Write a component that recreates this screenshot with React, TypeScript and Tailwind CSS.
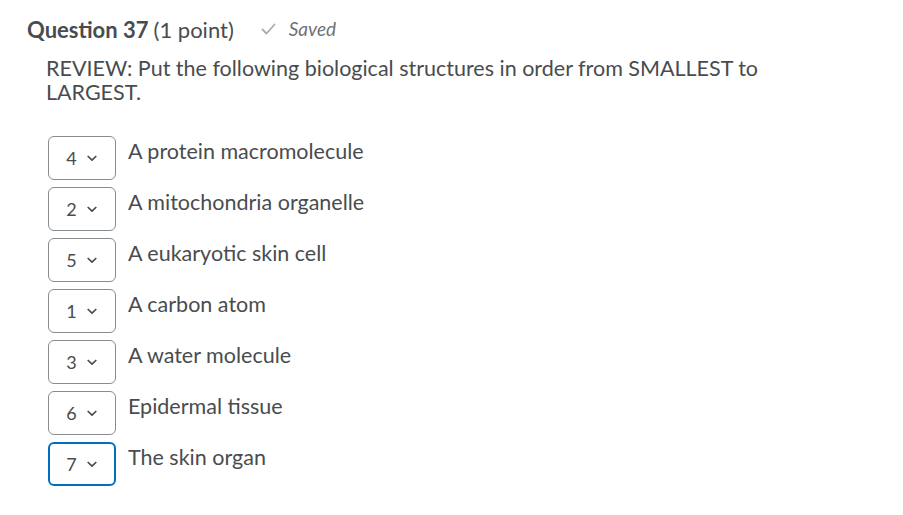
import React from "react";

const items = [
  { value: "4", label: "A protein macromolecule" },
  { value: "2", label: "A mitochondria organelle" },
  { value: "5", label: "A eukaryotic skin cell" },
  { value: "1", label: "A carbon atom" },
  { value: "3", label: "A water molecule" },
  { value: "6", label: "Epidermal tissue" },
  { value: "7", label: "The skin organ", focused: true },
];

const Chevron = () => (
  <svg width="10" height="7" viewBox="0 0 10 7" fill="none">
    <path d="M1.2 1.5L5 5.2l3.8-3.7" stroke="#494c4e" strokeWidth="1.7" strokeLinecap="round" strokeLinejoin="round" />
  </svg>
);

const Check = () => (
  <svg width="15" height="12" viewBox="0 0 15 12" fill="none">
    <path d="M1.5 6.5l4 4L13.5 1.5" stroke="#a8adb0" strokeWidth="1.8" strokeLinecap="round" strokeLinejoin="round" />
  </svg>
);

export default function App() {
  return (
    <div className="w-[903px] h-[515px] bg-white text-[#494c4e] font-['Lato','Liberation_Sans',sans-serif]">
      <div className="pl-[27px] pt-[15px]">
        <div className="flex items-center h-[28px]">
          <span className="text-[22px] font-bold">Question 37</span>
          <span className="text-[22px] ml-[5px]">(1 point)</span>
          <span className="ml-[27px] flex items-center gap-[13px]">
            <Check />
            <span className="italic text-[19px] text-[#6e7376]">Saved</span>
          </span>
        </div>
      </div>
      <div className="pl-[46px] pt-[13px] w-[800px]">
        <p className="text-[21.5px] leading-[24px]">
          REVIEW: Put the following biological structures in order from SMALLEST to LARGEST.
        </p>
        <div className="mt-[32px] flex flex-col gap-[7px] pl-[2px]">
          {items.map((item, index) => (
            <div key={index} className="flex items-start">
              <div
                className={
                  item.focused
                    ? "w-[68px] h-[44px] rounded-[6px] border-2 border-[#006fbf] flex items-center pl-[16px] gap-[10px]"
                    : "w-[68px] h-[44px] rounded-[6px] border border-[#868c8f] flex items-center pl-[17px] gap-[10px]"
                }
              >
                <span className="text-[18px] w-[11px] text-center">{item.value}</span>
                <Chevron />
              </div>
              <span className="ml-[12px] text-[21.5px] leading-[24px] pt-[3px]">{item.label}</span>
            </div>
          ))}
        </div>
      </div>
    </div>
  );
}
